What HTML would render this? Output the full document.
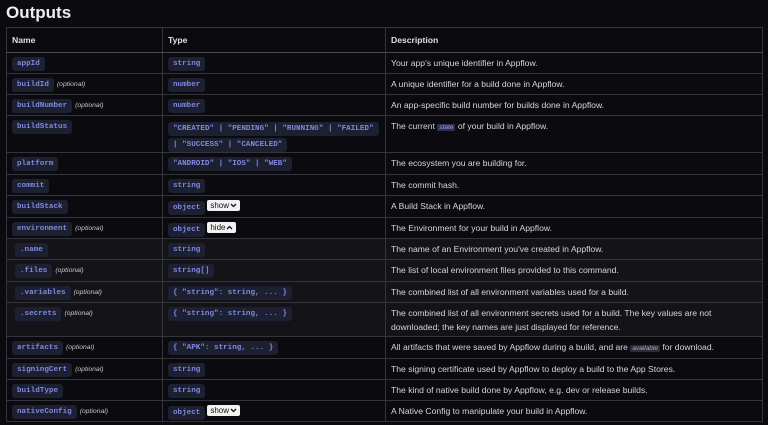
<!DOCTYPE html>
<html><head><style>
html,body{margin:0;padding:0;background:#0b0b0f;width:768px;height:425px;overflow:hidden;font-family:"Liberation Sans",sans-serif;color:#d6d6da}
h1{position:absolute;left:6px;top:3px;margin:0;font-size:17px;font-weight:bold;color:#eeeef0}
table{position:absolute;left:6px;top:27px;width:757px;border-collapse:collapse;table-layout:fixed}
td,th{border:1px solid #34343a;padding:0 5px;font-size:8.6px;text-align:left;vertical-align:top;white-space:nowrap}
th{height:24px;vertical-align:middle;font-weight:bold;color:#e0e0e4;border-bottom:1.5px solid #4a4a50}
td{padding-top:4px}
tr.n td{background:#131318}
code{display:inline-block;font-family:"Liberation Mono",monospace;font-size:7.6px;font-weight:bold;color:#8288e0;background:#1c2030;border-radius:3px;padding:3px 5px;line-height:8px}
td.s code{margin-left:3px}
.o{font-style:italic;font-size:6.8px;color:#c8c8cc;margin-left:3px}
.d{padding-top:3px;line-height:14px;white-space:normal}
.b{display:inline-block;background:#f2f2f2;color:#111;font-size:8px;border-radius:2px;padding:0 3px;margin-left:2px;line-height:11px;vertical-align:1px}
.b svg{vertical-align:0px;margin-left:1px}
.st{font-style:italic;font-size:6.5px;background:#2a2f5a;color:#aab;padding:0 2px;border-radius:1px}
.av{font-style:italic;font-size:6.5px;background:#2a2c38;color:#aab;padding:0 2px;border-radius:1px}
</style></head><body>
<h1>Outputs</h1>
<table>
<colgroup><col style="width:156px"><col style="width:223px"><col></colgroup>
<tr><th>Name</th><th>Type</th><th>Description</th></tr>
<tr style="height:21px"><td><code>appId</code></td><td><code>string</code></td><td class="d">Your app's unique identifier in Appflow.</td></tr>
<tr style="height:21px"><td><code>buildId</code><span class="o">(optional)</span></td><td><code>number</code></td><td class="d">A unique identifier for a build done in Appflow.</td></tr>
<tr style="height:21px"><td><code>buildNumber</code><span class="o">(optional)</span></td><td><code>number</code></td><td class="d">An app-specific build number for builds done in Appflow.</td></tr>
<tr style="height:35px"><td><code>buildStatus</code></td><td style="line-height:14px"><code>"CREATED" | "PENDING" | "RUNNING" | "FAILED"</code><br><code>| "SUCCESS" | "CANCELED"</code></td><td class="d">The current <span class="st">state</span> of your build in Appflow.</td></tr>
<tr style="height:22px"><td><code>platform</code></td><td><code>"ANDROID" | "IOS" | "WEB"</code></td><td class="d">The ecosystem you are building for.</td></tr>
<tr style="height:21px"><td><code>commit</code></td><td><code>string</code></td><td class="d">The commit hash.</td></tr>
<tr style="height:22px"><td><code>buildStack</code></td><td><code>object</code><span class="b">show<svg width="7" height="5" viewBox="0 0 7 5"><path d="M1 1l2.5 2.5L6 1" stroke="#111" stroke-width="1.3" fill="none"/></svg></span></td><td class="d">A Build Stack in Appflow.</td></tr>
<tr style="height:21px"><td><code>environment</code><span class="o">(optional)</span></td><td><code>object</code><span class="b">hide<svg width="7" height="5" viewBox="0 0 7 5"><path d="M1 4l2.5-2.5L6 4" stroke="#111" stroke-width="1.3" fill="none"/></svg></span></td><td class="d">The Environment for your build in Appflow.</td></tr>
<tr class="n" style="height:21px"><td class="s"><code>.name</code></td><td><code>string</code></td><td class="d">The name of an Environment you've created in Appflow.</td></tr>
<tr class="n" style="height:22px"><td class="s"><code>.files</code><span class="o">(optional)</span></td><td><code>string[]</code></td><td class="d">The list of local environment files provided to this command.</td></tr>
<tr class="n" style="height:21px"><td class="s"><code>.variables</code><span class="o">(optional)</span></td><td><code>{ "string": string, ... }</code></td><td class="d">The combined list of all environment variables used for a build.</td></tr>
<tr class="n" style="height:34px"><td class="s"><code>.secrets</code><span class="o">(optional)</span></td><td><code>{ "string": string, ... }</code></td><td class="d">The combined list of all environment secrets used for a build. The key values are not downloaded; the key names are just displayed for reference.</td></tr>
<tr style="height:22px"><td><code>artifacts</code><span class="o">(optional)</span></td><td><code>{ "APK": string, ... }</code></td><td class="d">All artifacts that were saved by Appflow during a build, and are <span class="av">available</span> for download.</td></tr>
<tr style="height:21px"><td><code>signingCert</code><span class="o">(optional)</span></td><td><code>string</code></td><td class="d">The signing certificate used by Appflow to deploy a build to the App Stores.</td></tr>
<tr style="height:21px"><td><code>buildType</code></td><td><code>string</code></td><td class="d">The kind of native build done by Appflow, e.g. dev or release builds.</td></tr>
<tr style="height:21px"><td><code>nativeConfig</code><span class="o">(optional)</span></td><td><code>object</code><span class="b">show<svg width="7" height="5" viewBox="0 0 7 5"><path d="M1 1l2.5 2.5L6 1" stroke="#111" stroke-width="1.3" fill="none"/></svg></span></td><td class="d">A Native Config to manipulate your build in Appflow.</td></tr>
</table>
</body></html>
